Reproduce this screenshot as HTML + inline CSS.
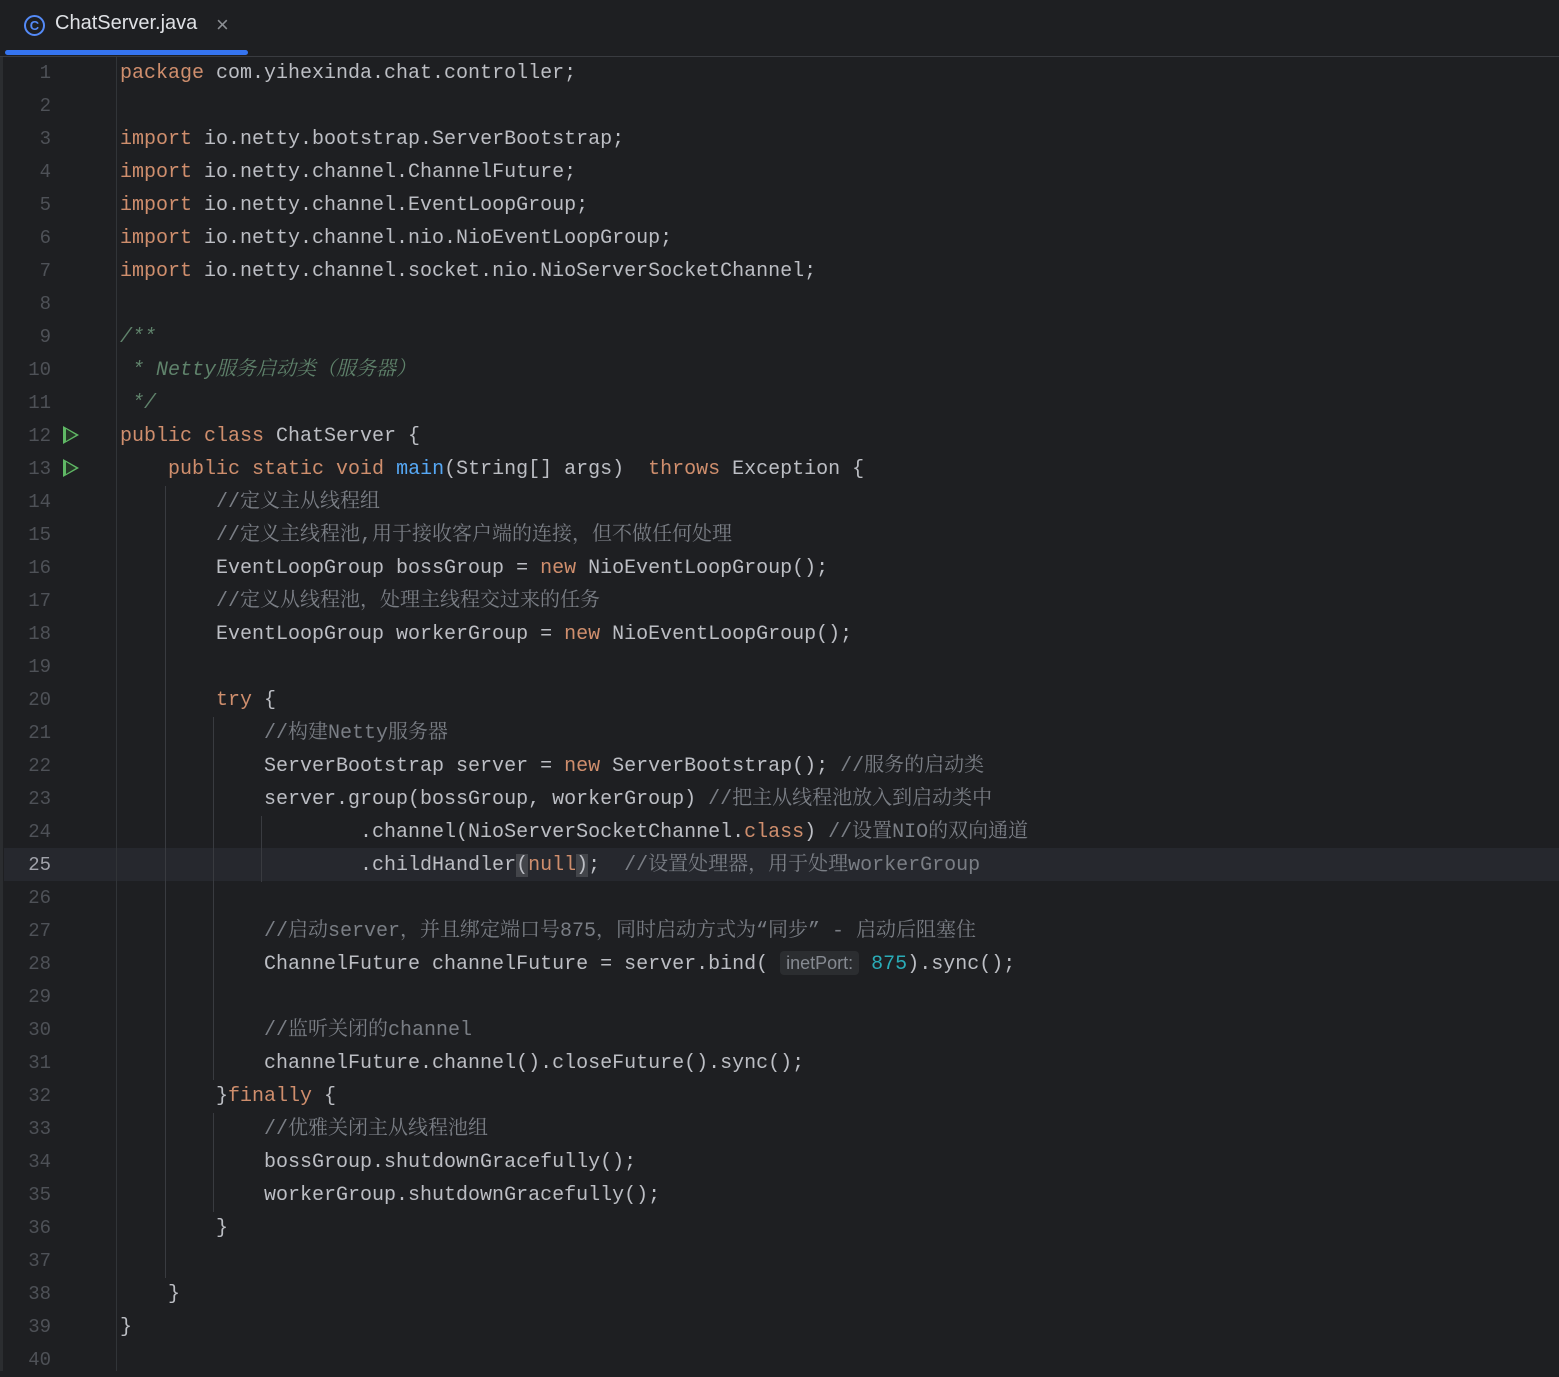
<!DOCTYPE html>
<html><head><meta charset="utf-8"><style>
html,body{margin:0;padding:0;background:#1e1f22;}
body{width:1559px;height:1371px;overflow:hidden;position:relative;font-family:"Liberation Mono","Noto Serif CJK SC",monospace;}
.tabbar{position:absolute;left:0;top:0;width:1559px;height:56px;background:#1e1f22;border-bottom:1px solid #393b40;}
.tab{position:absolute;left:24px;top:12px;font-family:"Liberation Sans",sans-serif;font-size:20px;color:#dfe1e5;}
.ico{position:absolute;left:24px;top:15px;width:17px;height:17px;border:2px solid #548af7;border-radius:50%;color:#548af7;font:bold 13px "Liberation Sans",sans-serif;text-align:center;line-height:17px;}
.x{position:absolute;left:216px;top:12px;color:#8c8f94;font:22px "Liberation Sans",sans-serif;}
.ul{position:absolute;left:5px;top:50px;width:243px;height:5px;background:#3574f0;border-radius:3px;}
.sep{position:absolute;left:116px;top:57px;width:1px;height:1314px;background:#313438;}
.leftbar{position:absolute;left:0;top:57px;width:3px;height:1314px;background:#2b2d30;}
.cur{position:absolute;left:4px;top:848px;width:1555px;height:33px;background:#26282e;}
.ln{position:absolute;left:0;width:51px;text-align:right;font-size:19px;color:#4e5157;line-height:33px;}
.l{position:absolute;left:120px;font-size:20px;line-height:33px;color:#bcbec4;white-space:pre;}
.k{color:#cf8e6d}.c{color:#7a7e85}.d{color:#5f826b;font-style:italic}.m{color:#56a8f5}.n{color:#2aacb8}
.hint{background:#2b2d30;color:#868a91;font:18px "Liberation Sans",sans-serif;border-radius:4px;padding:2px 6px;}
.g{position:absolute;width:1px;background:#393b40;}
.run{position:absolute;left:63px;width:0;height:0;border-top:9px solid transparent;border-bottom:9px solid transparent;border-left:16px solid #5fb865;}
.run i{position:absolute;left:-13px;top:-6px;width:0;height:0;border-top:6px solid transparent;border-bottom:6px solid transparent;border-left:10px solid #253627;}
.br{background:#43454a;}
</style></head><body>
<div class="tabbar"></div>
<div class="ico">C</div>
<div class="tab" style="left:55px">ChatServer.java</div>
<div class="x">×</div>
<div class="ul"></div>
<div class="leftbar"></div>
<div class="cur"></div>
<div class="sep"></div>
<div class="g" style="left:165px;top:486px;height:792px"></div>
<div class="g" style="left:213px;top:717px;height:363px"></div>
<div class="g" style="left:213px;top:1113px;height:99px"></div>
<div class="g" style="left:261px;top:816px;height:66px"></div>
<div class="run" style="top:426px"><i></i></div>
<div class="run" style="top:459px"><i></i></div>
<div id="nums"></div>
<div class="ln" style="top:57px">1</div><div class="ln" style="top:90px">2</div><div class="ln" style="top:123px">3</div><div class="ln" style="top:156px">4</div><div class="ln" style="top:189px">5</div><div class="ln" style="top:222px">6</div><div class="ln" style="top:255px">7</div><div class="ln" style="top:288px">8</div><div class="ln" style="top:321px">9</div><div class="ln" style="top:354px">10</div><div class="ln" style="top:387px">11</div><div class="ln" style="top:420px">12</div><div class="ln" style="top:453px">13</div><div class="ln" style="top:486px">14</div><div class="ln" style="top:519px">15</div><div class="ln" style="top:552px">16</div><div class="ln" style="top:585px">17</div><div class="ln" style="top:618px">18</div><div class="ln" style="top:651px">19</div><div class="ln" style="top:684px">20</div><div class="ln" style="top:717px">21</div><div class="ln" style="top:750px">22</div><div class="ln" style="top:783px">23</div><div class="ln" style="top:816px">24</div><div class="ln" style="top:849px;color:#a1a3ab">25</div><div class="ln" style="top:882px">26</div><div class="ln" style="top:915px">27</div><div class="ln" style="top:948px">28</div><div class="ln" style="top:981px">29</div><div class="ln" style="top:1014px">30</div><div class="ln" style="top:1047px">31</div><div class="ln" style="top:1080px">32</div><div class="ln" style="top:1113px">33</div><div class="ln" style="top:1146px">34</div><div class="ln" style="top:1179px">35</div><div class="ln" style="top:1212px">36</div><div class="ln" style="top:1245px">37</div><div class="ln" style="top:1278px">38</div><div class="ln" style="top:1311px">39</div><div class="ln" style="top:1344px">40</div>

<div class="l" style="top:57px"><span class="k">package</span> com.yihexinda.chat.controller;</div>
<div class="l" style="top:123px"><span class="k">import</span> io.netty.bootstrap.ServerBootstrap;</div>
<div class="l" style="top:156px"><span class="k">import</span> io.netty.channel.ChannelFuture;</div>
<div class="l" style="top:189px"><span class="k">import</span> io.netty.channel.EventLoopGroup;</div>
<div class="l" style="top:222px"><span class="k">import</span> io.netty.channel.nio.NioEventLoopGroup;</div>
<div class="l" style="top:255px"><span class="k">import</span> io.netty.channel.socket.nio.NioServerSocketChannel;</div>
<div class="l" style="top:321px"><span class="d">/**</span></div>
<div class="l" style="top:354px"><span class="d"> * Netty服务启动类（服务器）</span></div>
<div class="l" style="top:387px"><span class="d"> */</span></div>
<div class="l" style="top:420px"><span class="k">public class</span> ChatServer {</div>
<div class="l" style="top:453px">    <span class="k">public static void</span> <span class="m">main</span>(String[] args)  <span class="k">throws</span> Exception {</div>
<div class="l" style="top:486px">        <span class="c">//定义主从线程组</span></div>
<div class="l" style="top:519px">        <span class="c">//定义主线程池,用于接收客户端的连接，但不做任何处理</span></div>
<div class="l" style="top:552px">        EventLoopGroup bossGroup = <span class="k">new</span> NioEventLoopGroup();</div>
<div class="l" style="top:585px">        <span class="c">//定义从线程池，处理主线程交过来的任务</span></div>
<div class="l" style="top:618px">        EventLoopGroup workerGroup = <span class="k">new</span> NioEventLoopGroup();</div>
<div class="l" style="top:684px">        <span class="k">try</span> {</div>
<div class="l" style="top:717px">            <span class="c">//构建Netty服务器</span></div>
<div class="l" style="top:750px">            ServerBootstrap server = <span class="k">new</span> ServerBootstrap(); <span class="c">//服务的启动类</span></div>
<div class="l" style="top:783px">            server.group(bossGroup, workerGroup) <span class="c">//把主从线程池放入到启动类中</span></div>
<div class="l" style="top:816px">                    .channel(NioServerSocketChannel.<span class="k">class</span>) <span class="c">//设置NIO的双向通道</span></div>
<div class="l" style="top:849px">                    .childHandler<span class="br">(</span><span class="k">null</span><span class="br">)</span>;  <span class="c">//设置处理器，用于处理workerGroup</span></div>
<div class="l" style="top:915px">            <span class="c">//启动server，并且绑定端口号875，同时启动方式为“同步” - 启动后阻塞住</span></div>
<div class="l" style="top:948px">            ChannelFuture channelFuture = server.bind( <span class="hint">inetPort:</span> <span class="n">875</span>).sync();</div>
<div class="l" style="top:1014px">            <span class="c">//监听关闭的channel</span></div>
<div class="l" style="top:1047px">            channelFuture.channel().closeFuture().sync();</div>
<div class="l" style="top:1080px">        }<span class="k">finally</span> {</div>
<div class="l" style="top:1113px">            <span class="c">//优雅关闭主从线程池组</span></div>
<div class="l" style="top:1146px">            bossGroup.shutdownGracefully();</div>
<div class="l" style="top:1179px">            workerGroup.shutdownGracefully();</div>
<div class="l" style="top:1212px">        }</div>
<div class="l" style="top:1278px">    }</div>
<div class="l" style="top:1311px">}</div>
</body></html>
